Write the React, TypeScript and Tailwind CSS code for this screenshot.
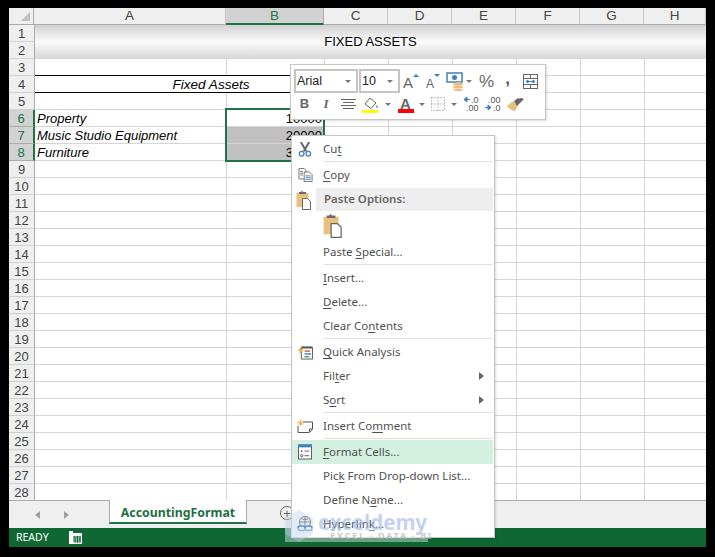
import React from "react";

const ARIAL = "font-['Liberation_Sans',Arial,sans-serif]";
const UI = "font-['Noto_Sans',sans-serif]";
const cols = ["A", "B", "C", "D", "E", "F", "G", "H"];
const widths = ["w-[192px]", "w-[98px]", "w-[64px]", "w-[64px]", "w-[64px]", "w-[64px]", "w-[64px]", "w-[62px]"];

function RowHead({ n, selected }: { n: number; selected?: boolean }) {
  return (
    <div
      className={`w-[26px] h-[17px] shrink-0 flex items-center justify-center border-r border-b text-[13px] leading-none pt-[1px] ${
        selected
          ? "bg-[#d2d2d2] text-[#217346] border-b-[#ababab] border-r-2 border-r-[#217346]"
          : "bg-[#efefef] text-[#444] border-b-[#d0d0d0] border-r-[#ababab]"
      }`}
    >
      {n}
    </div>
  );
}

function Cell({ i, children, className = "" }: { i: number; children?: React.ReactNode; className?: string }) {
  return (
    <div className={`${widths[i]} h-[17px] shrink-0 border-r border-b border-[#d4d4d4] overflow-hidden whitespace-nowrap text-[13px] leading-[18px] text-black ${className}`}>
      {children}
    </div>
  );
}

function Row({ n, a, b, sel, fill }: { n: number; a?: string; b?: string; sel?: boolean; fill?: boolean }) {
  return (
    <div className="flex h-[17px]">
      <RowHead n={n} selected={sel} />
      <Cell i={0} className="italic pl-[2px]">{a}</Cell>
      <Cell i={1} className={`text-right pr-[2px] ${fill ? "bg-[#c0c0c0] border-[#a8a8a8]" : ""}`}>{b}</Cell>
      {[2, 3, 4, 5, 6, 7].map((i) => <Cell key={i} i={i} />)}
    </div>
  );
}

function Ac({ t, u }: { t: string; u: number }) {
  return (
    <span>
      {t.slice(0, u)}
      <span className="underline underline-offset-2">{t[u]}</span>
      {t.slice(u + 1)}
    </span>
  );
}

function Sep() {
  return <div className="h-[2px] ml-[32px] mr-[1px] bg-[#e1e1e1] border-b border-white" />;
}

function Caret({ className = "" }: { className?: string }) {
  return <span className={`inline-block w-0 h-0 border-x-[3px] border-x-transparent border-t-[3px] border-t-[#777] ${className}`} />;
}

function MenuItem({ t, u, icon, sub, active }: { t: string; u: number; icon?: React.ReactNode; sub?: boolean; active?: boolean }) {
  return (
    <div className={`relative h-[24px] flex items-center pl-[31px] mr-[1px] ${active ? "bg-[#d3f0e0]" : ""}`}>
      {icon && <span className="absolute left-[3px] top-[3px] w-[20px] h-[18px] flex items-center justify-center">{icon}</span>}
      <Ac t={t} u={u} />
      {sub && <span className="absolute right-[9px] top-[8px] w-0 h-0 border-y-[4px] border-y-transparent border-l-[5px] border-l-[#666]" />}
    </div>
  );
}

const Scissors = () => (
  <svg width="14" height="15" viewBox="0 0 16 18" fill="none">
    <path d="M3 0l6.5 11M13 0L6.5 11" stroke="#666" strokeWidth="2.4" />
    <circle cx="4" cy="14" r="2.8" stroke="#3f7fbf" strokeWidth="1.5" />
    <circle cx="12" cy="14" r="2.8" stroke="#3f7fbf" strokeWidth="1.5" />
  </svg>
);
const CopyI = () => (
  <svg width="15" height="14" viewBox="0 0 16 16" fill="none" stroke="#666">
    <path d="M.5 .5h6l2 2v10h-8z" fill="#fff" />
    <path d="M2 4h3M2 6h3M2 8h3" />
    <path d="M6.5 4.5h6l3 3v8h-9z" fill="#fff" />
    <path d="M8 9h6M8 11h6M8 13h6" stroke="#3f7fbf" />
  </svg>
);
const PasteI = ({ s = 16 }: { s?: number }) => (
  <svg width={s} height={s * 1.25} viewBox="0 0 16 20" fill="none">
    <rect x="0.5" y="3" width="12" height="14" fill="#e9c07f" />
    <path d="M3 4V2h2l1-1.5L7 2h3v2z" fill="#6a6a6a" />
    <path d="M6.5 8.5h5l3 3v8h-8z" fill="#fff" stroke="#666" />
  </svg>
);
const Quick = () => (
  <svg width="15" height="15" viewBox="0 0 16 15" fill="none">
    <path d="M3.5 2.5h12v12h-12z" fill="#fff" stroke="#555" />
    <path d="M3.5 1h12v2h-12z" fill="#555" />
    <path d="M7 6h6" stroke="#d9534f" strokeWidth="1.5" />
    <path d="M7 9h7" stroke="#3f7fbf" strokeWidth="1.5" />
    <path d="M7 12h5" stroke="#3e9a8c" strokeWidth="1.5" />
    <path d="M4 0L0 6h2.5L1 10l5-6H3.5z" fill="#f0a93a" />
  </svg>
);
const Comment = () => (
  <svg width="16" height="13" viewBox="0 0 16 13" fill="none">
    <path d="M6 2h9.5v7l-3 3.5H1V6" stroke="#555" fill="#fff" />
    <path d="M12.5 12v-3h3" stroke="#555" />
    <path d="M3.5 0v6M.5 3h6M1.3 .8l4.4 4.4M5.7 .8L1.3 5.2" stroke="#f0b04a" />
  </svg>
);
const FormatI = () => (
  <svg width="14" height="16" viewBox="0 0 15 16" fill="none">
    <rect x="0.5" y="0.5" width="14" height="15" fill="#fff" stroke="#555" />
    <rect x="0" y="0" width="15" height="3" fill="#3f7fbf" />
    <circle cx="4" cy="7" r="1" fill="#555" />
    <path d="M7 7h5M7 12h5" stroke="#555" />
    <circle cx="4" cy="12" r="1.3" stroke="#555" />
  </svg>
);
const LinkI = () => (
  <svg width="16" height="16" viewBox="0 0 16 16" fill="none">
    <circle cx="8" cy="6" r="5.5" stroke="#666" />
    <path d="M2.5 6h11M8 .5v11M4.5 2.5c2 1.5 5 1.5 7 0" stroke="#666" />
    <rect x="1" y="10" width="7" height="4.5" rx="2.2" stroke="#2e6fb0" strokeWidth="1.6" fill="#fff" />
    <rect x="8" y="10" width="7" height="4.5" rx="2.2" stroke="#2e6fb0" strokeWidth="1.6" fill="#fff" />
  </svg>
);

function Toolbar() {
  return (
    <div className="absolute left-[290px] top-[64px] z-20 w-[256px] h-[56px] bg-white border border-[#c6c6c6] shadow-[1px_1px_2px_rgba(0,0,0,0.15)] pl-[3px] pt-[4px]">
      <div className={`flex items-center h-[24px] ${ARIAL}`}>
        <div className="w-[64px] h-[24px] border-2 border-[#c4c4c4] flex items-center justify-between pl-[1px] pr-[5px] text-[12.5px] text-[#222]">
          Arial <Caret />
        </div>
        <div className="w-[41px] h-[24px] border-2 border-[#c4c4c4] flex items-center justify-between pl-[1px] pr-[5px] text-[12.5px] text-[#222] ml-[1px]">
          10 <Caret />
        </div>
        <svg className="ml-[3px]" width="19" height="18" viewBox="0 0 19 18"><text x="0" y="16" fontSize="15" fill="#666" fontFamily="Liberation Sans">A</text><path d="M10 5l3-3 3 3z" fill="#3f7fbf" /></svg>
        <svg className="ml-[3px]" width="19" height="18" viewBox="0 0 19 18"><text x="1" y="16" fontSize="12" fill="#666" fontFamily="Liberation Sans">A</text><path d="M9 2h6l-3 3z" fill="#3f7fbf" /></svg>
        <svg className="ml-[2px]" width="18" height="19" viewBox="0 0 18 19" fill="none">
          <rect x="1" y="1" width="15" height="9" stroke="#3f7fbf" strokeWidth="1.5" fill="#fff" />
          <circle cx="8.5" cy="5.5" r="2.5" fill="#3f7fbf" />
          <ellipse cx="12" cy="12" rx="5" ry="1.7" fill="#e9c07f" />
          <ellipse cx="12" cy="15" rx="5" ry="1.7" fill="#e9c07f" />
          <ellipse cx="12" cy="18" rx="5" ry="1" fill="#e9c07f" />
        </svg>
        <Caret className="ml-[2px] mr-[7px]" />
        <span className="text-[17px] text-[#666] leading-none">%</span>
        <span className="ml-[11px] mr-[13px] text-[17px] text-[#555] font-bold leading-none -mt-[6px]">,</span>
        <svg width="15" height="15" viewBox="0 0 15 15" fill="none" stroke="#666">
          <rect x="0.5" y="0.5" width="14" height="14" fill="#fff" />
          <path d="M.5 4.5h14M.5 10.5h14M7.5 .5v4M7.5 10.5v4" />
          <path d="M3 7.5h9M3 7.5l2-1.5v3zM12 7.5l-2-1.5v3z" stroke="#3f7fbf" />
        </svg>
      </div>
      <div className={`flex items-center h-[24px] -mt-[1px] ${ARIAL} text-[#666]`}>
        <span className="w-[21px] text-center font-bold text-[13px]">B</span>
        <span className="w-[22px] text-center font-bold italic text-[13px] font-['Liberation_Serif',serif]">I</span>
        <svg className="ml-[4px]" width="15" height="11" viewBox="0 0 15 11" stroke="#666"><path d="M0 .5h15M2 3.5h11M0 6.5h15M2 9.5h11" /></svg>
        <svg className="ml-[6px]" width="17" height="17" viewBox="0 0 17 17" fill="none">
          <path d="M3 8l5-6 6 5-5 5.5z" stroke="#666" fill="#fff" />
          <path d="M15 9c1 1.5 1 3 0 3s-1-1.5 0-3z" fill="#3f7fbf" />
          <rect x="0" y="14" width="16" height="3" fill="#ffff00" />
        </svg>
        <Caret className="ml-[6px]" />
        <svg className="ml-[7px]" width="16" height="17" viewBox="0 0 16 17"><text x="2" y="13" fontSize="15" fontWeight="bold" fill="#666" fontFamily="Liberation Sans">A</text><rect y="13" width="16" height="4" fill="#ff0000" /></svg>
        <Caret className="ml-[5px]" />
        <svg className="ml-[6px]" width="14" height="14" viewBox="0 0 14 14" stroke="#888" strokeDasharray="1 2" fill="none"><path d="M.5.5h13v13H.5zM7 .5v13M.5 7h13" /></svg>
        <Caret className="ml-[6px]" />
        <svg className="ml-[6px]" width="17" height="16" viewBox="0 0 17 16"><path d="M1 3.5h6M1 3.5l3-2.5v5z" stroke="#3f7fbf" fill="#3f7fbf" /><text x="8" y="7" fontSize="9" fill="#555" fontFamily="Liberation Sans">.0</text><text x="3" y="15" fontSize="9" fill="#555" fontFamily="Liberation Sans">.00</text></svg>
        <svg className="ml-[5px]" width="17" height="16" viewBox="0 0 17 16"><text x="3" y="7" fontSize="9" fill="#555" fontFamily="Liberation Sans">.00</text><path d="M0 11.5h6M6 11.5l-3-2.5v5z" stroke="#3f7fbf" fill="#3f7fbf" /><text x="8" y="15" fontSize="9" fill="#555" fontFamily="Liberation Sans">.0</text></svg>
        <svg className="ml-[5px]" width="18" height="15" viewBox="0 0 18 15"><path d="M0 9l6-5 5 5-3 5c-3 0-6-2-8-5z" fill="#e9c07f" /><path d="M7 4l4-3 1 1-1 0 3-1 3 1-5 5-2 2z" fill="#666" /></svg>
      </div>
    </div>
  );
}

function Menu() {
  return (
    <div className={`absolute left-[291px] top-[135px] z-20 w-[204px] h-[403px] bg-white border border-[#c6c6c6] shadow-[1px_1px_2px_rgba(0,0,0,0.15)] pt-[1px] text-[11.5px] text-[#505050] ${UI}`}>
      <MenuItem t="Cut" u={2} icon={<Scissors />} />
      <Sep />
      <MenuItem t="Copy" u={0} icon={<CopyI />} />
      <div className="relative h-[24px] flex items-center">
        <span className="absolute left-[4px] top-[3px]"><PasteI /></span>
        <div className="ml-[24px] mr-[1px] w-full h-[23px] bg-[#eeeeee] flex items-center pl-[8px] font-semibold text-[#666]">Paste Options:</div>
      </div>
      <div className="h-[29px] pl-[31px] pt-[2px]"><PasteI s={20} /></div>
      <MenuItem t="Paste Special..." u={6} />
      <Sep />
      <MenuItem t="Insert..." u={0} />
      <MenuItem t="Delete..." u={0} />
      <MenuItem t="Clear Contents" u={8} />
      <Sep />
      <MenuItem t="Quick Analysis" u={0} icon={<Quick />} />
      <MenuItem t="Filter" u={3} sub />
      <MenuItem t="Sort" u={1} sub />
      <Sep />
      <MenuItem t="Insert Comment" u={9} icon={<Comment />} />
      <Sep />
      <MenuItem t="Format Cells..." u={0} icon={<FormatI />} active />
      <MenuItem t="Pick From Drop-down List..." u={3} />
      <MenuItem t="Define Name..." u={8} />
      <MenuItem t="Hyperlink..." u={8} icon={<LinkI />} />
    </div>
  );
}

function Watermark() {
  return (
    <div className="absolute left-[285px] top-[510px] z-30 w-[143px] h-[32px] pointer-events-none">
      <div className="absolute left-0 top-[18px] w-[143px] h-[14px] bg-white/40" />
      <svg className="absolute left-0 top-0" width="28" height="32" viewBox="0 0 28 32"><path d="M14 0l14 8v16l-14 8-14-8V8z" fill="#b9cdea" fillOpacity="0.4" /></svg>
      <span className={`absolute left-[33px] -top-[1px] text-[20.5px] font-bold leading-[26px] text-[#9db4e8]/60 ${UI}`}>exceldemy</span>
      <span className={`absolute left-[45px] top-[20px] text-[9.5px] font-bold tracking-[1.5px] leading-[12px] text-[#b3b3b3]/70 whitespace-nowrap ${UI}`}>EXCEL · DATA · BI</span>
    </div>
  );
}

export default function App() {
  const data: Record<number, { a?: string; b?: string; sel?: boolean; fill?: boolean }> = {
    6: { a: "Property", b: "10000", sel: true },
    7: { a: "Music Studio Equipment", b: "20000", sel: true, fill: true },
    8: { a: "Furniture", b: "30000", sel: true, fill: true },
  };
  return (
    <div className={`relative w-[715px] h-[557px] bg-black overflow-hidden pt-[8px] pl-[9px] ${ARIAL}`}>
      <div className="w-[697px] h-[539px] bg-white flex flex-col overflow-hidden">
        <div className="flex h-[17px] shrink-0">
          <div className="relative w-[26px] bg-[#efefef] border-r border-b border-[#ababab]">
            <span className="absolute right-[3px] bottom-[3px] w-0 h-0 border-l-[9px] border-l-transparent border-b-[9px] border-b-[#c0c0c0]" />
          </div>
          {cols.map((c, i) => (
            <div
              key={c}
              className={`${widths[i]} shrink-0 flex items-center justify-center text-[13.5px] leading-none border-r ${
                c === "B"
                  ? "bg-[#d2d2d2] text-[#217346] border-b-2 border-b-[#217346] border-r-[#ababab]"
                  : "bg-[#efefef] text-[#444] border-b border-b-[#ababab] border-r-[#c4c4c4]"
              }`}
            >
              {c}
            </div>
          ))}
        </div>
        <div className="flex h-[34px] shrink-0">
          <div className="flex flex-col">
            <RowHead n={1} />
            <RowHead n={2} />
          </div>
          <div className="flex-1 flex items-center justify-center text-[13px] text-black bg-gradient-to-b from-[#d2d2d2] via-[#fafafa] to-[#d6d6d6]">
            FIXED ASSETS
          </div>
        </div>
        <Row n={3} />
        <div className="flex h-[17px] shrink-0">
          <RowHead n={4} />
          <div className="w-[352px] h-[16px] shrink-0 -mt-px box-content border-y border-black text-center pr-[2px] italic text-[13.5px] leading-[17px] text-black">
            Fixed Assets
          </div>
          {[3, 4, 5, 6, 7].map((i) => <Cell key={i} i={i} />)}
        </div>
        <Row n={5} />
        <div className="relative">
          {[6, 7, 8].map((n) => <Row key={n} n={n} {...data[n]} />)}
          <div className="absolute left-[216px] -top-[2px] w-[100px] h-[54px] border-2 border-[#217346] pointer-events-none" />
        </div>
        {Array.from({ length: 20 }, (_, i) => i + 9).map((n) => <Row key={n} n={n} />)}
        <div className="relative flex h-[28px] shrink-0 bg-[#efefef] border-t border-[#ababab] -mt-px">
          <div className="w-[100px] flex items-center justify-start">
            <span className="ml-[26px] w-0 h-0 border-y-[4px] border-y-transparent border-r-[5px] border-r-[#a0a0a0]" />
            <span className="ml-[24px] w-0 h-0 border-y-[4px] border-y-transparent border-l-[5px] border-l-[#a0a0a0]" />
          </div>
          <div className={`w-[138px] h-[24px] -mt-px pt-[5px] bg-white border-x border-[#ababab] border-b-2 border-b-[#217346] flex items-center justify-center text-[12.3px] font-bold text-[#1e6e42] ${UI}`}>
            AccountingFormat
          </div>
          <span className="ml-[33px] mt-[5px] w-[14px] h-[14px] rounded-full border border-[#666] flex items-center justify-center text-[13px] leading-none text-[#666]">+</span>
        </div>
        <div className={`h-[19px] shrink-0 bg-[#0f6734] flex items-center pl-[7px] text-white text-[10.5px] ${UI}`}>
          READY
          <svg className="ml-[20px]" width="13" height="13" viewBox="0 0 13 13">
            <rect x="0" y="2" width="13" height="11" fill="#fff" />
            <path d="M4 6h8M4 8h8M4 10h8M6 5v7M8.5 5v7M11 5v7" stroke="#0f6734" />
            <rect x="0" y="0" width="4" height="5" fill="#fff" />
          </svg>
        </div>
      </div>
      <Toolbar />
      <Menu />
      <Watermark />
    </div>
  );
}
